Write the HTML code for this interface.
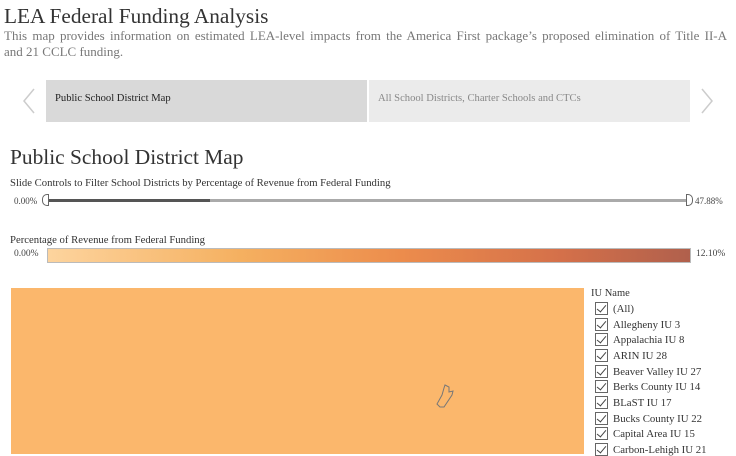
<!DOCTYPE html>
<html><head><style>
body{margin:0;width:736px;height:454px;overflow:hidden;background:#fff;font-family:"Liberation Serif",serif;position:relative}
.a{position:absolute;white-space:nowrap}
.cb{position:absolute;width:11px;height:11px;border:1px solid #666;background:#fff}
.cb:after{content:"";position:absolute;left:3px;top:0px;width:4px;height:8px;border-right:1px solid #444;border-bottom:1px solid #444;transform:rotate(40deg)}
.t{font-size:10.8px;color:#333}
</style></head><body>
<div class="a" style="left:4px;top:4px;font-size:21.3px;color:#333">LEA Federal Funding Analysis</div>
<div class="a" style="left:4px;top:28px;font-size:13px;color:#777;white-space:normal;width:723px;line-height:16px;text-align:justify">This map provides information on estimated LEA-level impacts from the America First package’s proposed elimination of Title II-A and&nbsp;21&nbsp;CCLC funding.</div>
<svg class="a" style="left:22px;top:88px" width="14" height="26"><path d="M12 1 L2 13 L12 25" stroke="#ccc" stroke-width="1.5" fill="none"/></svg>
<svg class="a" style="left:700px;top:88px" width="14" height="26"><path d="M2 1 L12 13 L2 25" stroke="#ccc" stroke-width="1.5" fill="none"/></svg>
<div class="a" style="left:46px;top:80px;width:321px;height:42px;background:#d9d9d9"></div>
<div class="a" style="left:369px;top:80px;width:321px;height:42px;background:#ebebeb"></div>
<div class="a" style="left:55px;top:93px;font-size:10.6px;color:#222">Public School District Map</div>
<div class="a" style="left:378px;top:93px;font-size:10.6px;color:#888">All School Districts, Charter Schools and CTCs</div>
<div class="a" style="left:10px;top:145px;font-size:21.4px;color:#333">Public School District Map</div>
<div class="a" style="left:10px;top:177px;font-size:10.7px;color:#333">Slide Controls to Filter School Districts by Percentage of Revenue from Federal Funding</div>
<div class="a" style="left:14px;top:196px;font-size:9px;color:#444">0.00%</div>
<div class="a" style="left:48px;top:199px;width:638px;height:3px;background:#aaa"></div>
<div class="a" style="left:48px;top:199px;width:162px;height:3px;background:#555"></div>
<div class="a" style="left:42px;top:194px;width:5px;height:10px;border:1px solid #666;border-radius:5px 0 0 5px;background:#fff"></div>
<div class="a" style="left:686px;top:194px;width:5px;height:10px;border:1px solid #666;border-radius:0 5px 5px 0;background:#fff"></div>
<div class="a" style="left:695px;top:196px;font-size:9px;color:#444">47.88%</div>
<div class="a" style="left:10px;top:234px;font-size:10.7px;color:#333">Percentage of Revenue from Federal Funding</div>
<div class="a" style="left:14px;top:249px;font-size:9.5px;color:#444">0.00%</div>
<div class="a" style="left:47px;top:248px;width:642px;height:13px;border:1px solid #bbb;background:linear-gradient(90deg,#fdd49e,#f5b060 30%,#ec8c4c 55%,#d4704a 80%,#b0604c)"></div>
<div class="a" style="left:696px;top:249px;font-size:9.5px;color:#444">12.10%</div>
<div class="a" style="left:11px;top:288px;width:573px;height:166px;background:#fbb76c"></div>
<svg class="a" style="left:434px;top:383px" width="22" height="26"><path d="M11 2 L15 4 L15 9 L19 8 L18 12 L10 24 L6 24 L3 21 L8 12 L10 5 Z" fill="none" stroke="#777" stroke-width="1"/></svg>
<div class="a" style="left:591px;top:288px;font-size:10.5px;color:#333">IU Name</div>
<div class="cb" style="left:595px;top:302px"></div><div class="a t" style="left:613px;top:303px">(All)</div>
<div class="cb" style="left:595px;top:318px"></div><div class="a t" style="left:613px;top:319px">Allegheny IU 3</div>
<div class="cb" style="left:595px;top:333px"></div><div class="a t" style="left:613px;top:334px">Appalachia IU 8</div>
<div class="cb" style="left:595px;top:349px"></div><div class="a t" style="left:613px;top:350px">ARIN IU 28</div>
<div class="cb" style="left:595px;top:365px"></div><div class="a t" style="left:613px;top:366px">Beaver Valley IU 27</div>
<div class="cb" style="left:595px;top:380px"></div><div class="a t" style="left:613px;top:381px">Berks County IU 14</div>
<div class="cb" style="left:595px;top:396px"></div><div class="a t" style="left:613px;top:397px">BLaST IU 17</div>
<div class="cb" style="left:595px;top:412px"></div><div class="a t" style="left:613px;top:413px">Bucks County IU 22</div>
<div class="cb" style="left:595px;top:427px"></div><div class="a t" style="left:613px;top:428px">Capital Area IU 15</div>
<div class="cb" style="left:595px;top:443px"></div><div class="a t" style="left:613px;top:444px">Carbon-Lehigh IU 21</div>
</body></html>
